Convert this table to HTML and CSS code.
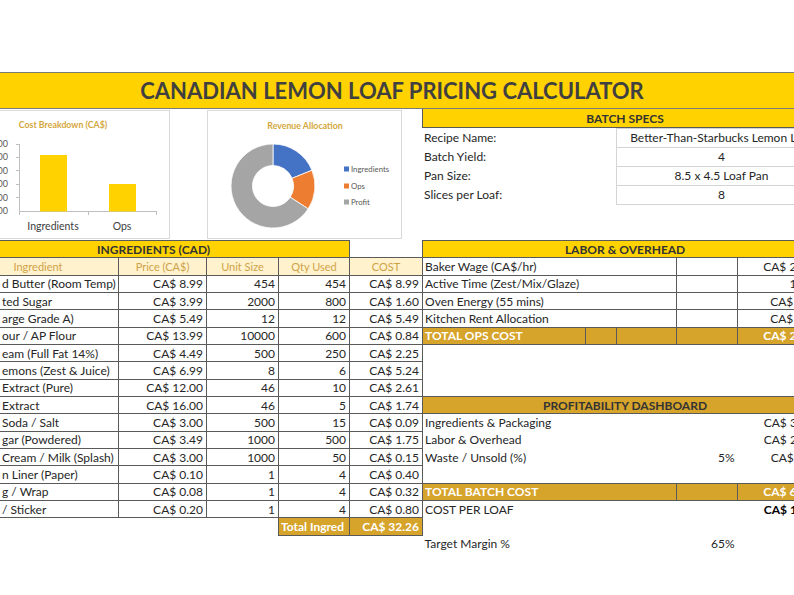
FILE: index.html
```html
<!DOCTYPE html>
<html lang="en">
<head>
<meta charset="utf-8">
<title>Canadian Lemon Loaf Pricing Calculator</title>
<link rel="stylesheet" href="styles.css">
</head>
<body>
<div class="sheet">
  <div class="title">CANADIAN LEMON LOAF PRICING CALCULATOR</div>

  <div class="top">
    <div class="chart chart-cost">
      <svg width="211" height="127" viewBox="0 0 211 127">
        <g transform="translate(42,-111)">
          <text class="ct" x="63" y="128" text-anchor="middle">Cost Breakdown (CA$)</text>
          <g class="ylab" text-anchor="end">
            <text x="8" y="147">$50.00</text>
            <text x="8" y="160.4">$40.00</text>
            <text x="8" y="173.8">$30.00</text>
            <text x="8" y="187.2">$20.00</text>
            <text x="8" y="200.6">$10.00</text>
            <text x="8" y="214">$0.00</text>
          </g>
          <g class="axis">
            <line x1="19.5" y1="144" x2="19.5" y2="211.5"/>
            <line x1="16" y1="144.5" x2="19.5" y2="144.5"/>
            <line x1="16" y1="157.5" x2="19.5" y2="157.5"/>
            <line x1="16" y1="170.5" x2="19.5" y2="170.5"/>
            <line x1="16" y1="184.5" x2="19.5" y2="184.5"/>
            <line x1="16" y1="197.5" x2="19.5" y2="197.5"/>
            <line x1="19.5" y1="211.5" x2="157" y2="211.5"/>
            <line x1="19.5" y1="211.5" x2="19.5" y2="215"/>
            <line x1="88.5" y1="211.5" x2="88.5" y2="215"/>
            <line x1="156.5" y1="211.5" x2="156.5" y2="215"/>
          </g>
          <rect x="40" y="155" width="27" height="56.5" fill="#ffd200"/>
          <rect x="109" y="184" width="27" height="27.5" fill="#ffd200"/>
          <text class="cat" x="53" y="230" text-anchor="middle">Ingredients</text>
          <text class="cat" x="122" y="230" text-anchor="middle">Ops</text>
        </g>
      </svg>
    </div>

    <div class="chart chart-rev">
      <svg width="193" height="127" viewBox="0 0 193 127">
        <g transform="translate(-208,-110)">
          <text class="ct" x="305" y="128" text-anchor="middle">Revenue Allocation</text>
          <g stroke="#ffffff" stroke-width="0.8">
            <path fill="#4472c4" d="M273,143 A42,42 0 0 1 311.94,169.27 L292.01,177.32 A20.5,20.5 0 0 0 273,164.5 Z"/>
            <path fill="#ed7d31" d="M311.94,169.27 A42,42 0 0 1 308.22,207.87 L290.19,196.16 A20.5,20.5 0 0 0 292.01,177.32 Z"/>
            <path fill="#a5a5a5" d="M308.22,207.87 A42,42 0 1 1 273,143 L273,164.5 A20.5,20.5 0 1 0 290.19,196.16 Z"/>
          </g>
          <rect x="344" y="165.5" width="5" height="5" fill="#4472c4"/>
          <rect x="344" y="182.5" width="5" height="5" fill="#ed7d31"/>
          <rect x="344" y="198.5" width="5" height="5" fill="#a5a5a5"/>
          <text class="leg" x="351" y="171">Ingredients</text>
          <text class="leg" x="351" y="188">Ops</text>
          <text class="leg" x="351" y="204">Profit</text>
        </g>
      </svg>
    </div>

    <div class="specs">
      <div class="specs-head">BATCH SPECS</div>
      <table class="specs-table">
        <colgroup><col class="c-lbl"><col class="c-val"></colgroup>
        <tr><td class="s-lbl">Recipe Name:</td><td class="s-val">Better-Than-Starbucks Lemon Loaf</td></tr>
        <tr><td class="s-lbl">Batch Yield:</td><td class="s-val">4</td></tr>
        <tr><td class="s-lbl">Pan Size:</td><td class="s-val">8.5 x 4.5 Loaf Pan</td></tr>
        <tr><td class="s-lbl">Slices per Loaf:</td><td class="s-val">8</td></tr>
      </table>
    </div>
  </div>

  <table class="grid">
    <colgroup>
      <col class="w161"><col class="w88"><col class="w72"><col class="w71"><col class="w73">
      <col class="w163"><col class="w31"><col class="w60"><col class="w61"><col class="w90">
    </colgroup>
    <tr>
      <td colspan="4" class="hdr">INGREDIENTS (CAD)</td><td class="rb"></td>
      <td colspan="5" class="hdr">LABOR &amp; OVERHEAD</td>
    </tr>
    <tr>
      <td class="colh">Ingredient</td><td class="colh">Price (CA$)</td><td class="colh">Unit Size</td><td class="colh">Qty Used</td><td class="colh">COST</td>
      <td colspan="3" class="b lbl">Baker Wage (CA$/hr)</td><td class="b"></td><td class="b val">CA$ 20.00</td>
    </tr>
    <tr>
      <td class="b ing">d Butter (Room Temp)</td><td class="b num">CA$ 8.99</td><td class="b num">454</td><td class="b num">454</td><td class="b num">CA$ 8.99</td>
      <td colspan="3" class="b lbl">Active Time (Zest/Mix/Glaze)</td><td class="b"></td><td class="b val">1.500</td>
    </tr>
    <tr>
      <td class="b ing">ted Sugar</td><td class="b num">CA$ 3.99</td><td class="b num">2000</td><td class="b num">800</td><td class="b num">CA$ 1.60</td>
      <td colspan="3" class="b lbl">Oven Energy (55 mins)</td><td class="b"></td><td class="b val">CA$ 1.25</td>
    </tr>
    <tr>
      <td class="b ing">arge Grade A)</td><td class="b num">CA$ 5.49</td><td class="b num">12</td><td class="b num">12</td><td class="b num">CA$ 5.49</td>
      <td colspan="3" class="b lbl">Kitchen Rent Allocation</td><td class="b"></td><td class="b val">CA$ 5.00</td>
    </tr>
    <tr>
      <td class="b ing">our / AP Flour</td><td class="b num">CA$ 13.99</td><td class="b num">10000</td><td class="b num">600</td><td class="b num">CA$ 0.84</td>
      <td class="gold lbl">TOTAL OPS COST</td><td class="gold"></td><td class="gold"></td><td class="gold"></td><td class="gold val">CA$ 26.25</td>
    </tr>
    <tr>
      <td class="b ing">eam (Full Fat 14%)</td><td class="b num">CA$ 4.49</td><td class="b num">500</td><td class="b num">250</td><td class="b num">CA$ 2.25</td>
      <td colspan="5"></td>
    </tr>
    <tr>
      <td class="b ing">emons (Zest &amp; Juice)</td><td class="b num">CA$ 6.99</td><td class="b num">8</td><td class="b num">6</td><td class="b num">CA$ 5.24</td>
      <td colspan="5"></td>
    </tr>
    <tr>
      <td class="b ing">Extract (Pure)</td><td class="b num">CA$ 12.00</td><td class="b num">46</td><td class="b num">10</td><td class="b num">CA$ 2.61</td>
      <td colspan="5"></td>
    </tr>
    <tr>
      <td class="b ing">Extract</td><td class="b num">CA$ 16.00</td><td class="b num">46</td><td class="b num">5</td><td class="b num">CA$ 1.74</td>
      <td colspan="5" class="goldh">PROFITABILITY DASHBOARD</td>
    </tr>
    <tr>
      <td class="b ing">Soda / Salt</td><td class="b num">CA$ 3.00</td><td class="b num">500</td><td class="b num">15</td><td class="b num">CA$ 0.09</td>
      <td colspan="4" class="lbl">Ingredients &amp; Packaging</td><td class="val">CA$ 32.26</td>
    </tr>
    <tr>
      <td class="b ing">gar (Powdered)</td><td class="b num">CA$ 3.49</td><td class="b num">1000</td><td class="b num">500</td><td class="b num">CA$ 1.75</td>
      <td colspan="4" class="lbl">Labor &amp; Overhead</td><td class="val">CA$ 26.25</td>
    </tr>
    <tr>
      <td class="b ing">Cream / Milk (Splash)</td><td class="b num">CA$ 3.00</td><td class="b num">1000</td><td class="b num">50</td><td class="b num">CA$ 0.15</td>
      <td colspan="3" class="lbl">Waste / Unsold (%)</td><td class="num">5%</td><td class="val">CA$ 2.93</td>
    </tr>
    <tr>
      <td class="b ing">n Liner (Paper)</td><td class="b num">CA$ 0.10</td><td class="b num">1</td><td class="b num">4</td><td class="b num">CA$ 0.40</td>
      <td colspan="5"></td>
    </tr>
    <tr>
      <td class="b ing">g / Wrap</td><td class="b num">CA$ 0.08</td><td class="b num">1</td><td class="b num">4</td><td class="b num">CA$ 0.32</td>
      <td colspan="3" class="gold lbl">TOTAL BATCH COST</td><td class="gold"></td><td class="gold val">CA$ 61.44</td>
    </tr>
    <tr>
      <td class="b ing">/ Sticker</td><td class="b num">CA$ 0.20</td><td class="b num">1</td><td class="b num">4</td><td class="b num">CA$ 0.80</td>
      <td colspan="4" class="lbl">COST PER LOAF</td><td class="val strong">CA$ 15.36</td>
    </tr>
    <tr>
      <td colspan="3"></td><td class="gold lbl">Total Ingred</td><td class="gold num">CA$ 32.26</td>
      <td colspan="5"></td>
    </tr>
    <tr>
      <td colspan="5"></td>
      <td colspan="3" class="lbl">Target Margin %</td><td class="num">65%</td><td></td>
    </tr>
  </table>
</div>
</body>
</html>
```
FILE: styles.css
```css
html, body {
  margin: 0;
  padding: 0;
  background: #ffffff;
}

body {
  width: 794px;
  height: 595px;
  overflow: hidden;
  font-family: Lato, "Open Sans", "Liberation Sans", sans-serif;
  color: #262626;
}

.sheet {
  margin-left: -43px;
  width: 870px;
  padding-top: 72px;
}

.title {
  box-sizing: border-box;
  height: 37px;
  border-top: 1px solid #7a7a7a;
  border-bottom: 1px solid #7a7a7a;
  background: #ffd200;
  display: flex;
  align-items: center;
  justify-content: center;
  font-weight: 700;
  font-size: 22px;
  color: #404040;
}

.top {
  display: flex;
  align-items: flex-start;
  height: 131px;
}

.chart {
  box-sizing: border-box;
  border: 1px solid #d9d9d9;
  margin-top: 1px;
  height: 129px;
  background: #ffffff;
}

.chart svg {
  display: block;
}

.chart-cost {
  width: 213px;
}

.chart-rev {
  width: 195px;
  margin-left: 37px;
}

.ct {
  font-size: 8.8px;
  font-weight: 700;
  fill: #d4a73c;
}

.ylab text {
  font-size: 9px;
  fill: #595959;
}

.axis line {
  stroke: #bfbfbf;
  stroke-width: 1;
}

.cat {
  font-size: 10.5px;
  fill: #404040;
}

.leg {
  font-size: 7.8px;
  fill: #595959;
}

.specs {
  margin-left: 20px;
  width: 405px;
  font-size: 12px;
}

.specs-head {
  box-sizing: border-box;
  height: 19px;
  border-left: 1px solid #5a5a5a;
  border-bottom: 1px solid #5a5a5a;
  background: #ffd200;
  font-weight: 700;
  color: #333333;
  display: flex;
  align-items: center;
  justify-content: center;
}

.specs-table {
  border-collapse: collapse;
  table-layout: fixed;
  width: 405px;
}

.c-lbl { width: 194px; }
.c-val { width: 211px; }

.specs-table td {
  height: 18px;
  padding: 0;
  white-space: nowrap;
  line-height: 16px;
}

.s-lbl {
  padding-left: 2px !important;
}

.s-val {
  border: 1px solid #d4d4d4;
  text-align: center;
}

.grid {
  border-collapse: collapse;
  table-layout: fixed;
  width: 870px;
  font-size: 12px;
}

.w161 { width: 161px; }
.w88 { width: 88px; }
.w72 { width: 72px; }
.w71 { width: 71px; }
.w73 { width: 73px; }
.w163 { width: 163px; }
.w31 { width: 31px; }
.w60 { width: 60px; }
.w61 { width: 61px; }
.w90 { width: 90px; }

.grid tr {
  height: 17.33px;
}

.grid td {
  padding: 0;
  white-space: nowrap;
  overflow: hidden;
  line-height: 15px;
}

.b {
  border: 1px solid #5a5a5a;
}

.rb {
  border-right: 1px solid #5a5a5a;
}

.hdr {
  border: 1px solid #5a5a5a;
  background: #ffd200;
  font-weight: 700;
  text-align: center;
  color: #333333;
}

.colh {
  border: 1px solid #5a5a5a;
  background: #fff2cc;
  color: #cfa24a;
  text-align: center;
  font-size: 11px;
}

.gold {
  border: 1px solid #5a5a5a;
  background: #d6a32b;
  color: #ffffff;
  font-weight: 700;
}

.goldh {
  border: 1px solid #5a5a5a;
  background: #d6a32b;
  color: #333333;
  font-weight: 700;
  text-align: center;
}

.ing {
  padding-left: 44px !important;
}

.lbl {
  padding-left: 2px !important;
}

.num {
  text-align: right;
  padding-right: 3px !important;
}

.val {
  text-align: right;
  padding-right: 7px !important;
}

.strong {
  font-weight: 700;
  color: #000000;
}
```
